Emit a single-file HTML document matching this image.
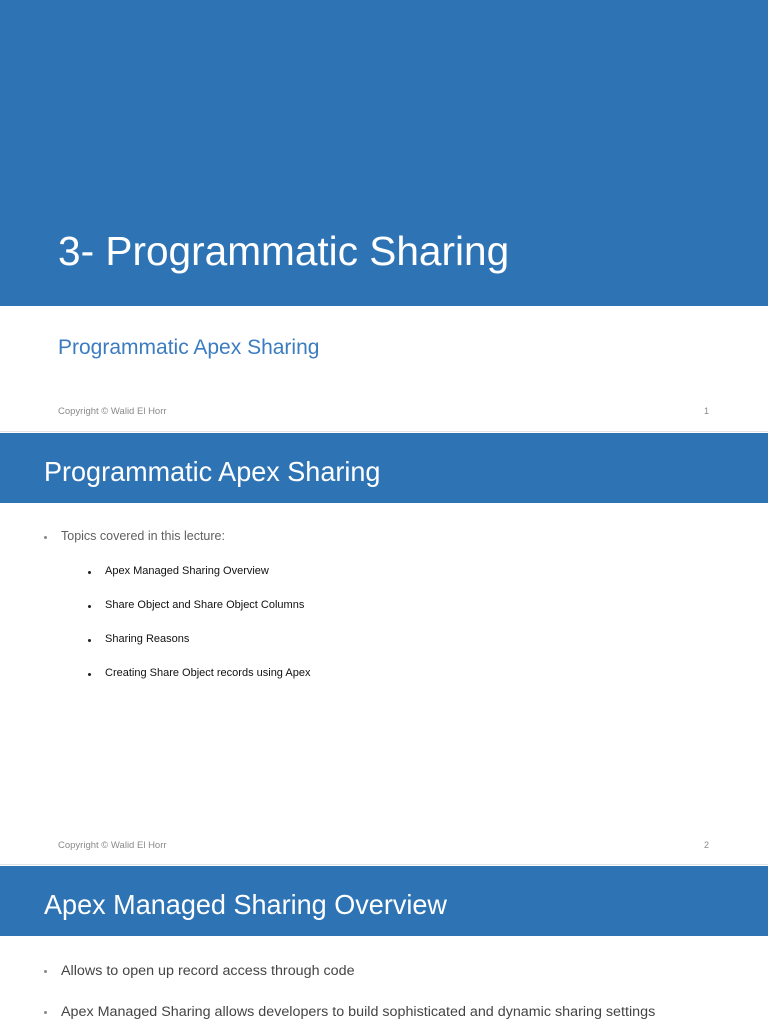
<!DOCTYPE html>
<html><head><style>
body{margin:0;width:768px;height:1024px;position:relative;background:#fff;font-family:"Liberation Sans",sans-serif;overflow:hidden}
.b{position:absolute;left:0;width:768px;background:#2e74b5}
.t{position:absolute;white-space:nowrap;transform-origin:left top}
.sep{position:absolute;left:0;width:768px;height:1px;background:#e4e4e4}
.dot{position:absolute;width:3px;height:3px;border-radius:50%}
</style></head><body>
<div class="b" style="top:0;height:306px"></div>
<div class="t" style="left:58px;top:228px;font-size:41px;color:#fff;transform:scaleX(0.99)">3- Programmatic Sharing</div>
<div class="t" style="left:58px;top:336px;font-size:21px;color:#3b7cc0;transform:scaleX(1.0)">Programmatic Apex Sharing</div>
<div class="t" style="left:58px;top:406px;font-size:9.5px;color:#8a8a8a">Copyright © Walid El Horr</div>
<div class="t" style="left:704px;top:406px;font-size:9px;color:#8a8a8a">1</div>
<div class="sep" style="top:431px"></div>
<div class="b" style="top:433px;height:70px"></div>
<div class="t" style="left:44px;top:456px;font-size:28px;color:#fff;transform:scaleX(0.965)">Programmatic Apex Sharing</div>
<div class="dot" style="left:44px;top:536px;background:#888"></div>
<div class="t" style="left:61px;top:529px;font-size:12.5px;color:#606060">Topics covered in this lecture:</div>
<div class="dot" style="left:88px;top:571px;background:#222"></div>
<div class="t" style="left:105px;top:565px;font-size:11px;color:#111">Apex Managed Sharing Overview</div>
<div class="dot" style="left:88px;top:605px;background:#222"></div>
<div class="t" style="left:105px;top:599px;font-size:11px;color:#111">Share Object and Share Object Columns</div>
<div class="dot" style="left:88px;top:639px;background:#222"></div>
<div class="t" style="left:105px;top:633px;font-size:11px;color:#111">Sharing Reasons</div>
<div class="dot" style="left:88px;top:673px;background:#222"></div>
<div class="t" style="left:105px;top:667px;font-size:11px;color:#111">Creating Share Object records using Apex</div>
<div class="t" style="left:58px;top:840px;font-size:9.5px;color:#8a8a8a">Copyright © Walid El Horr</div>
<div class="t" style="left:704px;top:840px;font-size:9px;color:#8a8a8a">2</div>
<div class="sep" style="top:864px"></div>
<div class="b" style="top:866px;height:70px"></div>
<div class="t" style="left:44px;top:889px;font-size:28px;color:#fff;transform:scaleX(0.966)">Apex Managed Sharing Overview</div>
<div class="dot" style="left:44px;top:970px;background:#888"></div>
<div class="t" style="left:61px;top:963px;font-size:13.5px;color:#444;transform:scaleX(1.06)">Allows to open up record access through code</div>
<div class="dot" style="left:44px;top:1011px;background:#888"></div>
<div class="t" style="left:61px;top:1004px;font-size:13.5px;color:#444;transform:scaleX(1.06)">Apex Managed Sharing allows developers to build sophisticated and dynamic sharing settings</div>
</body></html>
